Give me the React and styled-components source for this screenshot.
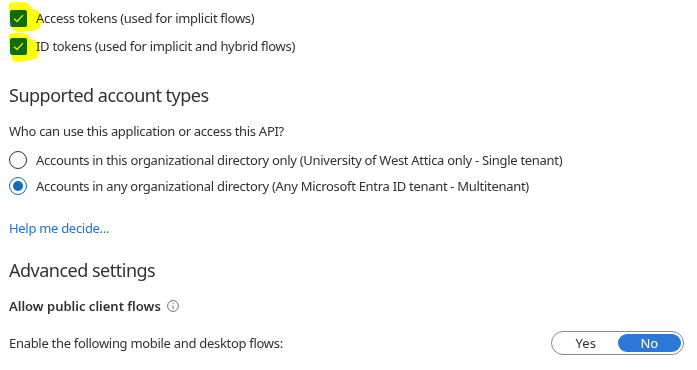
import React from "react";
import styled, { createGlobalStyle } from "styled-components";

const Global = createGlobalStyle`
  html, body { margin: 0; padding: 0; background: #fff; }
  body { font-family: "Segoe UI", "Noto Sans", sans-serif; color: #323130; }
`;

const Page = styled.div`
  width: 697px;
  height: 370px;
  overflow: hidden;
  padding: 0 0 0 9px;
  box-sizing: border-box;
  position: relative;
  letter-spacing: -0.3px;
`;

const CheckRow = styled.div`
  display: flex;
  align-items: center;
  height: 28px;
  margin-top: ${(p) => p.$top || 0}px;
  font-size: 13px;
`;

const Highlight = styled.svg`
  position: absolute;
  left: 0;
  top: ${(p) => p.$top}px;
  width: 44px;
  height: 32px;
  mix-blend-mode: multiply;
  pointer-events: none;
`;

const Box = styled.span`
  width: 17px;
  height: 17px;
  margin-left: 1px;
  border-radius: 2px;
  background: #0f6cbd;
  display: flex;
  align-items: center;
  justify-content: center;
`;

const Label = styled.span`
  margin-left: 9px;
  font-size: 13px;
  color: #323130;
`;

const Heading = styled.h2`
  margin: 0;
  font-weight: 400;
  font-size: 18px;
  letter-spacing: -0.5px;
  line-height: 28px;
  color: #323130;
  margin-top: ${(p) => p.$top}px;
`;

const Text = styled.div`
  font-size: 13px;
  line-height: 20px;
  margin-top: ${(p) => p.$top}px;
  font-weight: ${(p) => (p.$bold ? 600 : 400)};
  letter-spacing: ${(p) => (p.$bold ? "0" : "-0.3px")};
  display: flex;
  align-items: center;
`;

const RadioRow = styled.label`
  display: flex;
  align-items: center;
  height: 20px;
  font-size: 13px;
  margin-top: ${(p) => p.$top}px;
`;

const Radio = styled.span`
  width: 18px;
  height: 18px;
  box-sizing: border-box;
  border-radius: 50%;
  border: 1px solid ${(p) => (p.$checked ? "#0f6cbd" : "#323130")};
  display: flex;
  align-items: center;
  justify-content: center;
  margin-right: 9px;
  &::after {
    content: "";
    width: 10px;
    height: 10px;
    border-radius: 50%;
    background: ${(p) => (p.$checked ? "#0f6cbd" : "transparent")};
  }
`;

const Link = styled.a`
  display: block;
  color: #1a73d4;
  font-size: 13px;
  line-height: 20px;
  text-decoration: none;
  margin-top: 22px;
`;

const Info = styled.span`
  margin-left: 6px;
  display: inline-flex;
`;

const ToggleRow = styled.div`
  display: flex;
  align-items: center;
  justify-content: space-between;
  margin-top: 15px;
  padding-right: 13px;
  font-size: 13px;
`;

const Toggle = styled.div`
  width: 133px;
  height: 24px;
  box-sizing: border-box;
  border: 1px solid #8a8886;
  border-radius: 12px;
  display: flex;
  align-items: center;
  padding: 2px;
  letter-spacing: 0;
`;

const Seg = styled.span`
  flex: 1;
  height: 18px;
  border-radius: 9px;
  display: flex;
  align-items: center;
  justify-content: center;
  font-size: 13px;
  background: ${(p) => (p.$on ? "#2b78d6" : "transparent")};
  color: ${(p) => (p.$on ? "#fff" : "#323130")};
`;

const Check = () => (
  <svg width="11" height="9" viewBox="0 0 11 9">
    <path d="M1 4.6 L4 7.4 L10 1.2" fill="none" stroke="#ffffff" strokeWidth="1.2" />
  </svg>
);

const Blob = ({ top, d }) => (
  <Highlight $top={top} viewBox="0 0 44 32">
    <path d={d} fill="#ffff00" />
  </Highlight>
);

export default function App() {
  return (
    <>
      <Global />
      <Page>
        <CheckRow $top={4}>
          <Box><Check /></Box>
          <Label>Access tokens (used for implicit flows)</Label>
        </CheckRow>
        <CheckRow>
          <Box><Check /></Box>
          <Label>ID tokens (used for implicit and hybrid flows)</Label>
        </CheckRow>
        <Heading $top={21}>Supported account types</Heading>
        <Text $top={12}>Who can use this application or access this API?</Text>
        <RadioRow $top={9}>
          <Radio />
          Accounts in this organizational directory only (University of West Attica only - Single tenant)
        </RadioRow>
        <RadioRow $top={6}>
          <Radio $checked />
          Accounts in any organizational directory (Any Microsoft Entra ID tenant - Multitenant)
        </RadioRow>
        <Link href="#">Help me decide...</Link>
        <Heading $top={18}>Advanced settings</Heading>
        <Text $top={12} $bold>
          Allow public client flows
          <Info>
            <svg width="12" height="12" viewBox="0 0 12 12">
              <circle cx="6" cy="6" r="5.4" fill="none" stroke="#605e5c" strokeWidth="0.9" />
              <line x1="6" y1="5.2" x2="6" y2="9" stroke="#605e5c" strokeWidth="0.9" />
              <circle cx="6" cy="3.5" r="0.6" fill="#605e5c" />
            </svg>
          </Info>
        </Text>
        <ToggleRow>
          <span>Enable the following mobile and desktop flows:</span>
          <Toggle>
            <Seg>Yes</Seg>
            <Seg $on>No</Seg>
          </Toggle>
        </ToggleRow>
        <Blob top={1} d="M9 2 Q18 0 27 2 Q31 5 32 8 Q39 9 41 14 Q42 23 39 28 Q30 31 20 31 Q14 31 12 27 L12 21 L10 21 Q8 12 9 2 Z" />
        <Blob top={31} d="M9 3 Q17 1 27 3 Q30 6 30 8 Q37 9 39 13 Q40 22 37 27 Q27 31 15 31 Q12 30 12 27 L12 21 L10 21 Q8 12 9 3 Z" />
      </Page>
    </>
  );
}
